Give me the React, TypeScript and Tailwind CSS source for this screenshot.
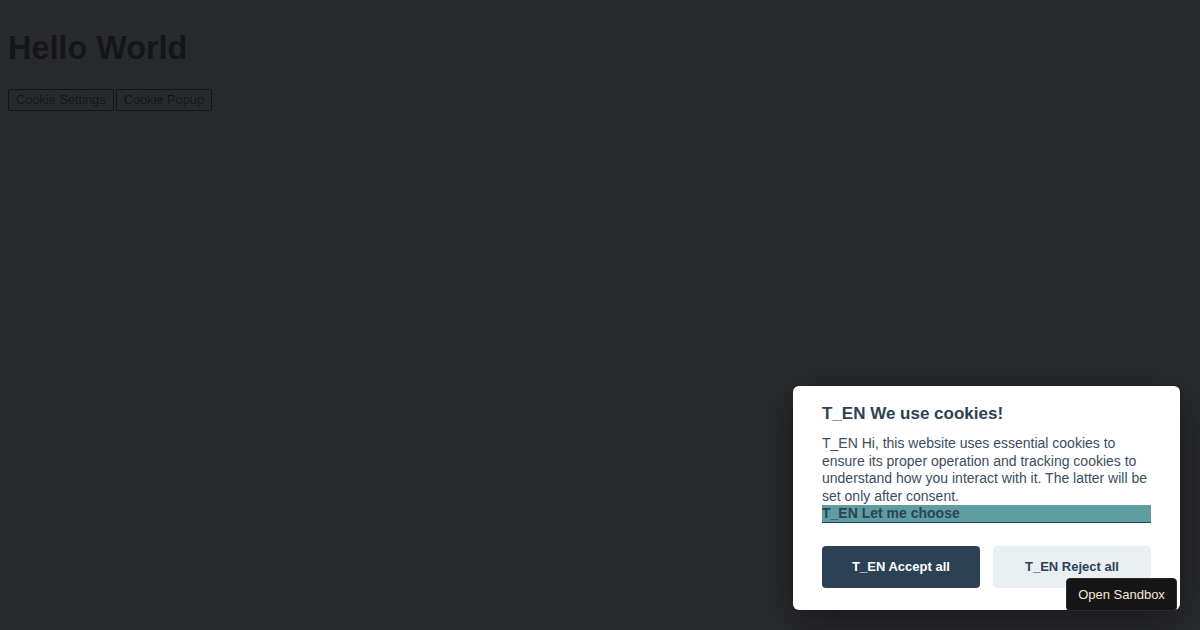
export default function App() {
    return (
        <div className="relative min-h-[630px] bg-[#292a2d] px-2 font-['Liberation_Sans',Arial,sans-serif] text-[#141517]">
            <h1 className="pt-[30px] text-[32.4px] font-bold leading-[37px]">Hello World</h1>
            <div className="mt-[22px] flex">
                <button className="h-[22px] rounded-[2px] border border-[#141517] px-[7px] text-[12.8px] leading-none">Cookie Settings</button>
                <button className="ml-[2px] h-[22px] rounded-[2px] border border-[#141517] px-[7px] text-[12.8px] leading-none">Cookie Popup</button>
            </div>

            <div className="absolute bottom-[20px] right-[20px] w-[387px] rounded-[6px] bg-white px-[29px] pb-[22px] pt-[17px] text-[#2d4156] shadow-[0_10px_40px_rgba(0,0,0,0.45)]">
                <h2 className="text-[17px] font-bold leading-[22px]">T_EN We use cookies!</h2>
                <p className="mt-[10px] text-[14px] leading-[17.5px] text-[#3b4d60]">
                    T_EN Hi, this website uses essential cookies to ensure its proper operation and tracking cookies to understand how you interact with it. The latter will be set only after consent.
                </p>
                <button className="block h-[18px] w-full border-b border-[#2d4156] bg-[#5f9ea0] text-left text-[14px] font-bold leading-[17px] text-[#2d4156]">T_EN Let me choose</button>
                <div className="mt-[23px] flex gap-[13px]">
                    <button className="h-[42px] flex-1 rounded-[4px] bg-[#2d4156] text-[13px] font-bold text-white">T_EN Accept all</button>
                    <button className="h-[42px] flex-1 rounded-[4px] bg-[#eaeff2] text-[13px] font-bold text-[#2d4156]">T_EN Reject all</button>
                </div>
            </div>

            <button className="absolute bottom-[19px] right-[23px] h-[33px] w-[111px] rounded-[4px] border border-[#2a2a2a] bg-[#151515] text-[13px] text-[#f3e8d8]">Open Sandbox</button>
        </div>
    )
}
